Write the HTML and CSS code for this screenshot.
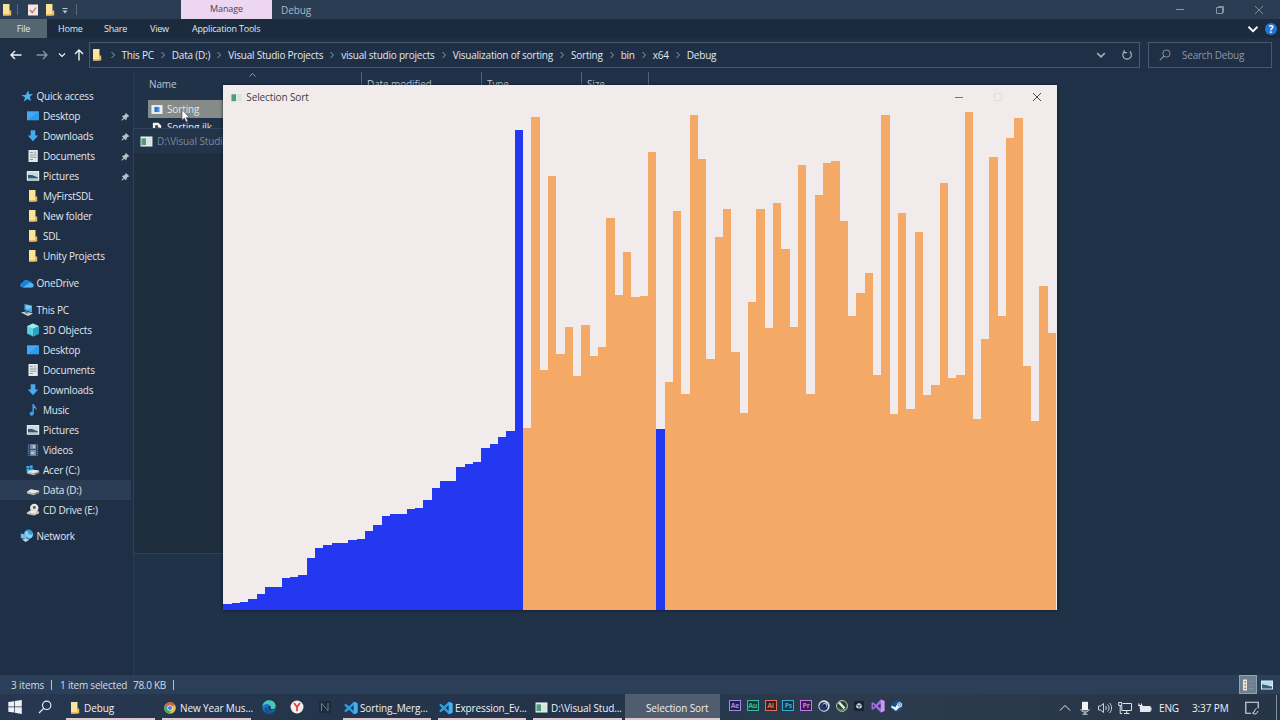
FILE: index.html
```html
<!DOCTYPE html>
<html lang="en">
<head>
<meta charset="utf-8">
<title>Debug</title>
<link rel="stylesheet" href="styles.css">
</head>
<body>
<svg class="defs" aria-hidden="true">
  <symbol id="folder" viewBox="0 0 14 14"><path d="M3 1h6.500v8H3z" fill="#f8dc8b"/><path d="M3 1h6v11.500H3z" fill="#fbe39a"/><path d="M9 7.500h2.200v5H3V11h6z" fill="#e8bd62"/></symbol>
  <symbol id="star" viewBox="0 0 14 14"><path d="M8.300 1.500l.8 3.800 4-.2-3.200 2.600 1 4.300L7.600 10l-3.800 2.600 1.300-4.200-3.700-2.300 4.200-.2z" fill="#4db0ef"/></symbol>
  <symbol id="desktop" viewBox="0 0 14 14"><path d="M1 2.500h12v8.800H1z" fill="#2f9be8"/><path d="M1 2.500h12L1 11.300z" fill="#41aaf2"/></symbol>
  <symbol id="down" viewBox="0 0 14 14"><path d="M4.700 1.300h4.600v5.200h3L7 12.200 1.700 6.500h3z" fill="#4aa9ee"/></symbol>
  <symbol id="doc" viewBox="0 0 14 14"><path d="M2.500 1h9.300v12H2.500z" fill="#e6e8e8"/><path d="M4 3.500h3M4 6h6.500M4 8.200h6.500M4 10.500h3M9 2.500v2.300" stroke="#7594a7" stroke-width=".9"/></symbol>
  <symbol id="pic" viewBox="0 0 14 14"><path d="M.8 2h12.400v9.800H.8z" fill="#e2e8eb"/><path d="M2 3.200h10v7.300H2z" fill="#c3dae4"/><path d="M2 6l4 0 6 2.500v1H2z" fill="#37576b"/><path d="M2 9h10v1.500H2z" fill="#8fb0b8"/></symbol>
  <symbol id="cloud" viewBox="0 0 14 14"><path d="M3 11.500C.8 11.500.2 10.200 .2 9 .2 7.500 1.300 6.500 2.700 6.400 3.500 3.800 7 2.800 9 5c2 0 3 1 3 2.300 2.500.7 2.200 4.200-.5 4.200z" fill="#1b83dc"/><path d="M3 11.500l6-4.500c2-1.200 5 .8 4.500 2.600-.3 1.300-1 1.900-2 1.900z" fill="#51b3f3"/></symbol>
  <symbol id="pc" viewBox="0 0 14 14"><path d="M4.500 1l7.500 1.500v7L4.500 7z" fill="#47a9e4"/><path d="M6 2.300l5 1v2L6 6z" fill="#82cef4"/><path d="M1 9.500l5-1 7 2-5 2.500z" fill="#cfd8de"/><path d="M4 9.500l3-.5 2.500 1-3 .7z" fill="#5e7487"/></symbol>
  <symbol id="cube" viewBox="0 0 14 14"><path d="M7 .5l6 2.700v7.500l-6 2.800-6-2.800V3.200z" fill="#43c1d6"/><path d="M7 .5l6 2.700-6 2.500-6-2.500z" fill="#9aebf0"/><path d="M7 5.700l6-2.500v7.500l-6 2.800z" fill="#25a4c1"/><path d="M2 4l5 2v6L2 9.500z" fill="#62d1dd"/></symbol>
  <symbol id="music" viewBox="0 0 14 14"><path d="M6.500 1h1.300c.3 2.400 3.800 3.200 2.500 6.600-.2-1.500-1.200-2.300-2.400-2.500v5.100c0 3.300-4.400 3-4.200.6.200-1.800 1.800-2.300 2.800-1.800z" fill="#44a5e9"/></symbol>
  <symbol id="video" viewBox="0 0 14 14"><path d="M1.500 1h11v12h-11z" fill="#273f5e"/><path d="M4.200 1.300h5.700v5H4.200zM4.200 7h5.700v5.700H4.200z" fill="#7897b8"/><path d="M7 2h2v3H7zM5 9h3v2H5z" fill="#cdc4a1"/><path d="M2.700 1.500v11M11.200 1.500v11" stroke="#94a8b5" stroke-width="1" stroke-dasharray="1 1.100"/></symbol>
  <symbol id="drive" viewBox="0 0 14 14"><path d="M.8 9L5 6.500l8.300 1.300-.2 2.200-5.200 2.200L1 10.500z" fill="#b2b6b8"/><path d="M.8 8.800L5 6.300l8.200 1.400-4.800 2.500z" fill="#e8e7e2"/><path d="M8 11.200l4.300-1.600" stroke="#60727d"/></symbol>
  <symbol id="cd" viewBox="0 0 14 14"><circle cx="8.300" cy="5" r="4.200" fill="#e9e4df"/><circle cx="8.300" cy="4.500" r="1.400" fill="#485868"/><path d="M.8 9.500L5 7l8.200 1.400-.2 2.200-5 2L1 11z" fill="#c5c3bf"/><path d="M2 9.300l4-1.800 6 1-4 2z" fill="#f1e8df"/></symbol>
  <symbol id="net" viewBox="0 0 14 14"><circle cx="8.500" cy="5.200" r="4.700" fill="#3f97d7"/><path d="M5 3c2-2 4 0 3.500 1.500S11 6 13 5c-.2 2-1 3.500-3 4.500-3-1-3.500-2-5-3z" fill="#8bd3e9"/><path d="M.8 4.500l5.500 1.300v4.400L.8 9z" fill="#71bfe3"/><path d="M2 10.500l4.500-.7 3 1-4 2.200z" fill="#c3d4dd"/></symbol>
  <symbol id="pin" viewBox="0 0 10 10"><path d="M5.500 1l3.800 3.600-.8.8-.8-.2-1.600 1.900v1.600l-.8.500-1.700-1.800L1 9.700.4 9l2.300-2.600L1 4.800l.6-.7 1.700-.1 1.800-1.700-.2-.8z" fill="#b6c0c9"/></symbol>
  <symbol id="console" viewBox="0 0 14 12"><path d="M.5 .5h13v11H.5z" fill="#e9edeb"/><path d="M1.500 2.500h5v7.500h-5z" fill="#4f9b82"/><path d="M7.500 2.500h5v7.500h-5z" fill="#d6e5dd"/></symbol>
  <symbol id="exe" viewBox="0 0 14 12"><path d="M.5 .8h13v10.400H.5z" fill="#e8eef3"/><path d="M4 3h4v6H4z" fill="#2377cf"/><path d="M8 3h2v6H8z" fill="#549ae0"/></symbol>
  <symbol id="chev" viewBox="0 0 8 8"><path d="M2.500 1l3 3-3 3" fill="none" stroke="#91a0b2" stroke-width="1"/></symbol>
  <symbol id="vdown" viewBox="0 0 8 8"><path d="M1 2.500l3 3 3-3" fill="none" stroke="currentColor" stroke-width="1.200"/></symbol>
  <symbol id="arrow" viewBox="0 0 12 12"><path d="M11.500 6H1M5 2L1 6l4 4" fill="none" stroke="currentColor" stroke-width="1.400"/></symbol>
  <symbol id="x" viewBox="0 0 10 10"><path d="M1 1l8 8M9 1L1 9" fill="none" stroke="currentColor" stroke-width=".9"/></symbol>
  <symbol id="mag" viewBox="0 0 14 14"><circle cx="8.700" cy="5.300" r="4.200" fill="none" stroke="currentColor" stroke-width="1.100"/><path d="M5.700 8.300L1 13" stroke="currentColor" stroke-width="1.200"/></symbol>
  <symbol id="vscode" viewBox="0 0 14 14"><path d="M9.800 .7L13.500 2.300v9.400l-3.700 1.600L5 8.800 1.800 11.200.5 10.500v-1L3 7 .5 4.500v-1l1.300-.7L5 5.200zM9.800 4L6.500 7l3.300 3z" fill="#2d9de3" fill-rule="evenodd"/><path d="M9.800 .7l3.700 1.600v9.400l-3.700 1.600z" fill="#45b1f2"/></symbol>
</svg>

<main class="explorer">
  <header class="titlebar">
    <div class="quick">
      <svg class="i14"><use href="#folder"/></svg><i class="bar"></i>
      <svg class="i12 check" viewBox="0 0 12 12"><path d="M1 .5h10v11H1z" fill="#f1e6e4"/><path d="M3 6l2.300 2.500L9 3.500" fill="none" stroke="#cf6b50" stroke-width="1.200"/></svg>
      <svg class="i14"><use href="#folder"/></svg>
      <svg class="qdown" viewBox="0 0 8 8"><path d="M1.500 1.500h5" stroke="#bcc5cf"/><path d="M1.500 3.500h5L4 6.500z" fill="#bcc5cf"/></svg><i class="bar"></i>
    </div>
    <div class="manage">Manage</div>
    <div class="wtitle">Debug</div>
    <div class="controls">
      <svg class="i10" viewBox="0 0 10 10"><path d="M1 4.500h8" stroke="currentColor"/></svg>
      <svg class="i10" viewBox="0 0 10 10"><path d="M1.500 2.500h6v6h-6zM3.500 2.500v-1h5v6h-1" fill="none" stroke="currentColor"/></svg>
      <svg class="i10"><use href="#x"/></svg>
    </div>
  </header>
  <nav class="ribbon">
    <span class="file">File</span><span class="t-home">Home</span><span class="t-share">Share</span><span class="t-view">View</span><span class="t-app">Application Tools</span>
    <div class="help"><svg class="i12"><use href="#vdown"/></svg><b>?</b></div>
  </nav>
  <div class="address">
    <div class="arrows">
      <svg class="i12"><use href="#arrow"/></svg>
      <svg class="i12 fwd"><use href="#arrow"/></svg>
      <svg class="i8"><use href="#vdown"/></svg>
      <svg class="i12 up"><use href="#arrow"/></svg>
    </div>
    <div class="path">
      <svg class="i14"><use href="#folder"/></svg>
      <svg class="i8"><use href="#chev"/></svg><span>This PC</span>
      <svg class="i8"><use href="#chev"/></svg><span>Data (D:)</span>
      <svg class="i8"><use href="#chev"/></svg><span>Visual Studio Projects</span>
      <svg class="i8"><use href="#chev"/></svg><span>visual studio projects</span>
      <svg class="i8"><use href="#chev"/></svg><span>Visualization of sorting</span>
      <svg class="i8"><use href="#chev"/></svg><span>Sorting</span>
      <svg class="i8"><use href="#chev"/></svg><span>bin</span>
      <svg class="i8"><use href="#chev"/></svg><span>x64</span>
      <svg class="i8"><use href="#chev"/></svg><span>Debug</span>
      <div class="pathend"><svg class="i10"><use href="#vdown"/></svg>
      <svg class="i12" viewBox="0 0 12 12"><path d="M3.800 2.200A4.300 4.300 0 1 0 8.800 2.500M3.200 1v2.700H6" fill="none" stroke="currentColor" stroke-width="1.200"/></svg></div>
    </div>
    <div class="search"><svg class="i12"><use href="#mag"/></svg><span>Search Debug</span></div>
  </div>
  <div class="body">
    <aside class="tree">
      <div class="group">
        <div class="row top"><svg class="i14"><use href="#star"/></svg>Quick access</div>
        <div class="row"><svg class="i14"><use href="#desktop"/></svg>Desktop<svg class="pin"><use href="#pin"/></svg></div>
        <div class="row"><svg class="i14"><use href="#down"/></svg>Downloads<svg class="pin"><use href="#pin"/></svg></div>
        <div class="row"><svg class="i14"><use href="#doc"/></svg>Documents<svg class="pin"><use href="#pin"/></svg></div>
        <div class="row"><svg class="i14"><use href="#pic"/></svg>Pictures<svg class="pin"><use href="#pin"/></svg></div>
        <div class="row"><svg class="i14"><use href="#folder"/></svg>MyFirstSDL</div>
        <div class="row"><svg class="i14"><use href="#folder"/></svg>New folder</div>
        <div class="row"><svg class="i14"><use href="#folder"/></svg>SDL</div>
        <div class="row"><svg class="i14"><use href="#folder"/></svg>Unity Projects</div>
      </div>
      <div class="group"><div class="row top"><svg class="i14"><use href="#cloud"/></svg>OneDrive</div></div>
      <div class="group">
        <div class="row top"><svg class="i14"><use href="#pc"/></svg>This PC</div>
        <div class="row"><svg class="i14"><use href="#cube"/></svg>3D Objects</div>
        <div class="row"><svg class="i14"><use href="#desktop"/></svg>Desktop</div>
        <div class="row"><svg class="i14"><use href="#doc"/></svg>Documents</div>
        <div class="row"><svg class="i14"><use href="#down"/></svg>Downloads</div>
        <div class="row"><svg class="i14"><use href="#music"/></svg>Music</div>
        <div class="row"><svg class="i14"><use href="#pic"/></svg>Pictures</div>
        <div class="row"><svg class="i14"><use href="#video"/></svg>Videos</div>
        <div class="row"><svg class="i14" viewBox="0 0 14 14"><use href="#drive" width="14" height="14"/><path d="M.5 3h2.700v2.500H.5zM3.700 2.500h3v3h-3zM.5 6h2.700v2.200H.5zM3.700 6h3v1.500h-3z" fill="#35b4ec"/></svg>Acer (C:)</div>
        <div class="row selected"><svg class="i14"><use href="#drive"/></svg>Data (D:)</div>
        <div class="row"><svg class="i14"><use href="#cd"/></svg>CD Drive (E:)</div>
      </div>
      <div class="group"><div class="row top"><svg class="i14"><use href="#net"/></svg>Network</div></div>
    </aside>
    <section class="files">
      <div class="cols"><span class="c-name">Name<svg class="sort" viewBox="0 0 8 4"><path d="M1 3.500l3-3 3 3" fill="none" stroke="#a5b2c0" stroke-width=".8"/></svg></span><span class="c-date">Date modified</span><span class="c-type">Type</span><span class="c-size">Size</span></div>
      <div class="filerow active"><svg class="fi"><use href="#exe"/></svg>Sorting</div>
      <div class="filerow"><svg class="fi" viewBox="0 0 12 12"><path d="M1.500 .8h6l3 3V12h-9z" fill="#f3eeea"/><path d="M4 3.500h3V6h2v4H4z" fill="#35414f"/></svg>Sorting.ilk</div>
    </section>
  </div>
  <footer class="status"><span class="s1">3 items</span><span class="s2">1 item selected</span><span class="s3">78.0 KB</span>
    <div class="views"><svg class="details" viewBox="0 0 18 19"><path d="M0 0h18v19H0z" fill="#6e7f8d"/><path d="M.5 .5h17v18H.5z" fill="none" stroke="#94a2ac"/><path d="M4 4.500h4v11H4z" fill="#efe5df"/><path d="M5.500 6h1.500v1.500H5.500zm0 3.300h1.500v1.500H5.500zm0 3.200h1.500V14H5.500z" fill="#8a7470"/><path d="M9.500 6.500h5m-5 3.500h5m-5 3.500h5" stroke="#8998a2" stroke-width=".7"/></svg><svg class="i12" viewBox="0 0 12 12"><path d="M0 1.500h12v9H0z" fill="#dceaf2"/><path d="M1 5l4 1 6 1.500v2H1z" fill="#34607a"/><path d="M1 2.500h10v3L7 6 1 5z" fill="#b6daeb"/></svg></div>
  </footer>
</main>

<div class="console"><div class="console-title"><svg class="ci"><use href="#console"/></svg>D:\Visual Studio Projects</div></div>

<div class="app">
  <div class="app-title"><svg class="ci"><use href="#console"/></svg><span>Selection Sort</span>
    <div class="app-controls">
      <svg class="i10" viewBox="0 0 10 10"><path d="M1 5.500h8" stroke="#777"/></svg>
      <svg class="i10" viewBox="0 0 10 10"><path d="M1.500 1.500h7v7h-7z" fill="none" stroke="#e3dddd"/></svg>
      <svg class="i10 close"><use href="#x"/></svg>
    </div>
  </div>
  <div class="chart" id="chart"></div>
</div>
<svg class="cursor" viewBox="0 0 10 14"><path d="M1 .8v10.500l2.400-2.200 1.700 4 1.800-.8-1.700-3.900h3.300z" fill="#fff" stroke="#3b4047" stroke-width=".6"/></svg>

<div class="taskbar">
  <div class="cell w-start"><svg class="i14" viewBox="0 0 14 14"><path d="M.3 2l5.700-.8v5.300H.3zM6.700 1.100L13.800 0v6.500H6.700zM.3 7.300H6v5.200l-5.700-.8zM6.700 7.300h7.100V14l-7.100-1.200z" fill="#eef2f6"/></svg></div>
  <div class="cell w-search"><svg class="i14"><use href="#mag"/></svg></div>
  <div class="task open t1"><svg class="i14"><use href="#folder"/></svg>Debug</div>
  <div class="task open t2"><svg class="i12" viewBox="0 0 12 12"><circle cx="6" cy="6" r="5.800" fill="#eac44a"/><path d="M6 6L1 3.100A5.800 5.800 0 0 1 11 3.100z" fill="#dc5b4a"/><path d="M1 3.100A5.800 5.800 0 0 0 5.600 11.800L8.200 7z" fill="#48a866"/><circle cx="6" cy="6" r="2.700" fill="#f2f2f2"/><circle cx="6" cy="6" r="2.100" fill="#4386dd"/></svg>New Year Mus...</div>
  <div class="cell w-edge"><svg class="i14" viewBox="0 0 14 14"><circle cx="7" cy="7" r="6.700" fill="#1c77cb"/><path d="M.3 6.500C1 2.500 4 .3 7 .3c5 0 7.300 4 6.500 6.800-.6 2-3.300 2.500-5 1.600C10 6 7 3.500 4 4 2 4.300 1 5.500.3 6.500z" fill="#45cbb0"/><path d="M5.500 6.500c-1.500 3 1.500 6.500 6.500 4.800-4 3.800-10.500 1.700-9.500-2.300.3-1.300 1.700-2.400 3-2.500z" fill="#135196"/><path d="M6.200 6.700c.5-1 2-1 2.500 0 .3.700-.5 1.500-.2 2 1.200.8 3 .7 4.500-.2-1 1.700-2 2.200-3.500 2.200-2.700 0-4-2.300-3.300-4z" fill="#223a58"/></svg></div>
  <div class="cell w-y"><svg class="i14" viewBox="0 0 14 14"><circle cx="7" cy="7" r="6.500" fill="#f5eeee"/><path d="M4 3l3 4 3-4M7 7v4.300" fill="none" stroke="#dc3535" stroke-width="1.600"/></svg></div>
  <div class="cell w-n"><svg class="i12" viewBox="0 0 12 12"><path d="M0 0h12v12H0z" fill="#1c2b3e"/><path d="M2.500 10V2.200L9 9.800V2" fill="none" stroke="#6a7c90"/></svg></div>
  <div class="task open t3"><svg class="i14"><use href="#vscode"/></svg>Sorting_Merg...</div>
  <div class="task open t4"><svg class="i14"><use href="#vscode"/></svg>Expression_Ev...</div>
  <div class="task open t5"><svg class="ci"><use href="#console"/></svg>D:\Visual Stud...</div>
  <div class="task open t6">Selection Sort</div>
  <div class="dock">
    <b class="ae">Ae</b><b class="au">Au</b><b class="ai">Ai</b><b class="ps">Ps</b><b class="pr">Pr</b>
    <svg class="i12" viewBox="0 0 12 12"><circle cx="6" cy="6" r="5.700" fill="#e3e8f3"/><circle cx="5.700" cy="6.300" r="4.400" fill="#26376f"/><circle cx="7" cy="5" r="2.300" fill="#9eb2dc"/><circle cx="6.500" cy="5.800" r="1.700" fill="#172449"/></svg>
    <svg class="i12" viewBox="0 0 12 12"><circle cx="6" cy="6" r="5.400" fill="#24412f" stroke="#bdcfba"/><path d="M3 2.500l5.500 5.800" stroke="#e7eee5" stroke-width="2.400"/><path d="M2.500 8c2 3 5 2 7 1" fill="none" stroke="#7bb45b"/></svg>
    <svg class="i12" viewBox="0 0 12 12"><path d="M1 1h10v10H1z" fill="#172435"/><path d="M6 3l2.700 1.500v3L6 9 3.300 7.500v-3z" fill="#d6dce2"/><path d="M6 6V9M6 6L3.500 4.600M6 6l2.500-1.400" stroke="#263545" stroke-width=".9"/></svg>
    <svg class="i14" viewBox="0 0 14 14"><path d="M9.800 .5l3.700 1.500v10l-3.700 1.500-5-5L2 10.800.5 10V4L2 3.200l2.800 2.300zM9.800 4.200L6.700 7l3.100 2.800zM2 5.200v3.600L3.700 7z" fill="#a269e2" fill-rule="evenodd"/><path d="M9.800 .5l3.700 1.500v10l-3.700 1.500z" fill="#c29bf3"/></svg>
    <svg class="i12" viewBox="0 0 12 12"><circle cx="6" cy="6" r="5.800" fill="#175089"/><path d="M.3 5.500l4 1.700L6 4.500a2.600 2.600 0 1 1 2.700 3L6.500 9c-.4 2-3 2-3.500 0L.5 8z" fill="#eef3f7"/><circle cx="8.500" cy="4.800" r="1.500" fill="#c5d7e6" stroke="#36577e" stroke-width=".6"/></svg>
  </div>
  <div class="tray">
    <div class="ti"><svg class="i12" viewBox="0 0 12 12"><path d="M.8 8.500L6 3.500l5.200 5" fill="none" stroke="#dce2e8"/></svg></div>
    <div class="ti"><svg class="i14" viewBox="0 0 14 14"><path d="M4 .8h6v8.500H4z" fill="#f2f2f3"/><path d="M2.800 8c0 4 8.400 4 8.400 0M7 11v2M4.500 13.200h5" fill="none" stroke="#d9dfe4"/></svg></div>
    <div class="ti"><svg class="i14" viewBox="0 0 14 14"><path d="M.5 5h2L5.500 2.500v9L2.500 9h-2zM7.500 5c1 1.200 1 2.800 0 4M9.500 3.500c2 2 2 5 0 7M11.500 2c2.800 3 2.800 7 0 10" fill="none" stroke="#dce2e8" stroke-width=".9"/></svg></div>
    <div class="ti"><svg class="i14" viewBox="0 0 14 14"><path d="M4.500 2.500h9v7H3.800V5M8.700 9.500v3M6 12.500h5.500M.7 1.500h3v3h-3zM2.200 4.500v8h2" fill="none" stroke="#dce2e8"/></svg></div>
    <div class="ti"><svg class="i14" viewBox="0 0 14 14"><path d="M2 5h10.500v1.500h1v3h-1V11H2z" fill="#e4e8ec"/><path d="M0 4.500h4.500M1 2.500v2M3.500 2.500v2M2.300 5v3" stroke="#f1f3f5"/></svg></div>
    <span class="eng">ENG</span><span class="clock">3:37 PM</span>
    <svg class="i14 note" viewBox="0 0 14 14"><path d="M6 12.200H.8V1.200h12.400v6" fill="none" stroke="#e1e6eb" stroke-width="1.100"/><path d="M11.500 7.500c-2.500 1-1.500 4-4 4.500 2 2 5.500.5 5.300-2" fill="none" stroke="#e1e6eb"/></svg>
    <i class="edge"></i>
  </div>
</div>
<script src="chart.js"></script>
</body>
</html>
```

FILE: styles.css
```css
* { box-sizing: border-box; }
body { margin: 0; width: 1280px; height: 720px; overflow: hidden; display: flex; flex-direction: column; background: #203248; color: #e1e7ee; font: 10px/14px "Open Sans", "Noto Sans", sans-serif; letter-spacing: -.12px; white-space: nowrap; }
svg { display: block; flex: none; }
.defs { position: absolute; width: 0; height: 0; }
.i8 { width: 8px; height: 8px; }
.i10 { width: 10px; height: 10px; }
.i12 { width: 12px; height: 12px; }
.i14 { width: 14px; height: 14px; }
.ci { width: 13px; height: 11px; }

.explorer { height: 694px; display: flex; flex-direction: column; }
.titlebar { height: 19px; display: flex; align-items: center; background: #2b3d53; color: #aab6c2; }
.quick { width: 181px; display: flex; align-items: center; }
.quick .bar { width: 1px; height: 11px; background: #59697b; margin: 0 9px 0 3px; }
.quick .check { margin-right: 4px; }
.qdown { width: 8px; height: 8px; margin: 2px 4px 0 4px; }
.manage { width: 91px; height: 19px; background: #edd7f0; color: #4b4054; text-align: center; line-height: 18px; font-size: 9px; }
.wtitle { margin-left: 9px; line-height: 20px; }
.controls { margin-left: auto; width: 105px; padding-right: 16px; display: flex; justify-content: space-between; color: #8794a2; }
.ribbon { height: 19px; background: #1b2a3d; display: flex; align-items: center; line-height: 20px; font-size: 9px; letter-spacing: -.2px; }
.file { width: 47px; height: 19px; background: #536672; text-align: center; }
.t-home { margin-left: 11px; width: 46px; }
.t-share { width: 46px; }
.t-view { width: 42px; }
.help { margin-left: auto; display: flex; align-items: center; gap: 6px; color: #fff; padding-right: 3px; }
.help b { width: 12px; height: 12px; border-radius: 50%; background: #2475cf; text-align: center; line-height: 12px; font-size: 10px; }
.address { height: 34px; display: flex; padding: 4px 8px 4px 9px; background: #1f2f45; }
.arrows { width: 80px; display: flex; align-items: center; color: #f0f3f6; padding-left: 1px; gap: 14px; }
.arrows .fwd { transform: scaleX(-1); color: #8593a4; }
.arrows .i8 { margin: 0 -6px 0 -4px; }
.arrows .up { transform: rotate(90deg); margin-left: -1px; }
.path { width: 1051px; border: 1px solid #47596d; display: flex; align-items: center; letter-spacing: -.22px; }
.path > .i8 { margin: 0 5px 0 5px; }
.path > .i14 + .i8 { margin-left: 4.500px; }
.pathend { margin-left: auto; display: flex; align-items: center; gap: 15px; padding-right: 6px; color: #a4b0bd; }
.search { margin-left: 8px; flex: 1; border: 1px solid #47596d; display: flex; align-items: center; padding-left: 10px; gap: 11px; color: #8a98a8; letter-spacing: -.22px; }

.body { flex: 1; display: flex; }
.tree { width: 134px; padding-top: 14.300px; background: #1f2f45; border-right: 1px solid #2b3d52; letter-spacing: -.2px; }
.group { margin-bottom: 6.700px; }
.row { height: 20px; display: flex; align-items: center; gap: 3px; padding-left: 26px; padding-right: 1px; margin-right: 2px; }
.row.top { padding-left: 20px; gap: 2.500px; }
.row.selected { background: #2b3c55; }
.pin { width: 9px; height: 9px; margin-left: auto; }
.files { flex: 1; background: #203248; padding-left: 14px; }
.cols { height: 28px; display: flex; line-height: 24px; color: #bac5d0; }
.cols span { border-right: 1px solid #526276; }
.c-name { position: relative; width: 214px; padding-left: 1px; }
.sort { position: absolute; left: 100px; top: 1px; width: 9px; height: 4px; }
.c-date { width: 120px; padding-left: 5px; }
.c-type { width: 100px; padding-left: 5px; }
.c-size { width: 67px; padding-left: 5px; }
.filerow { height: 18px; display: flex; align-items: center; gap: 4px; padding-left: 3px; }
.filerow.active { width: 200px; background: #858b88; }
.fi { width: 12px; height: 11px; }
.status { height: 19px; background: #2c3f58; display: flex; align-items: center; padding-left: 11px; color: #d4dbe3; }
.s1 { width: 41px; border-right: 1px solid #b8c2cd; line-height: 10px; margin-right: 8px; }
.s2 { width: 73px; letter-spacing: -.22px; }
.s3 { width: 41px; border-right: 1px solid #b8c2cd; line-height: 10px; letter-spacing: -.3px; }
.views { margin-left: auto; display: flex; align-items: center; gap: 4px; padding-right: 7px; }
.details { width: 18px; height: 19px; }

.console { position: absolute; left: 134px; top: 129px; width: 200px; height: 424px; background: #1e2e3f; box-shadow: 0 0 0 1px #304257; }
.console-title { height: 24px; background: #22344a; display: flex; align-items: center; gap: 4px; padding-left: 6px; color: #7b8999; }
.app { position: absolute; left: 223.300px; top: 85px; width: 833.400px; height: 525px; display: flex; flex-direction: column; background: #f1ebeb; box-shadow: 0 0 3px rgba(6, 16, 28, .8); color: #414146; }
.app-title { height: 25px; display: flex; align-items: center; gap: 3px; padding: 0 15px 1px 7px; }
.app-controls { margin-left: auto; width: 88px; display: flex; justify-content: space-between; color: #38383d; }
.chart { flex: 1; display: flex; align-items: flex-end; }
.chart div { flex: 1 1 0; background: #f4aa66; }
.chart .hot { background: #2338f0; }
.cursor { position: absolute; left: 181px; top: 109px; width: 10px; height: 14px; }

.taskbar { height: 26px; display: flex; background: linear-gradient(90deg, #26374f, #22334a 45%, #2c3b4d 65%, #263448); color: #eef1f5; }
.cell { display: flex; align-items: center; justify-content: center; }
.w-start { width: 30px; }
.w-search { width: 30px; margin-right: 6px; }
.w-edge { width: 36px; }
.w-y { width: 20px; margin-right: 8px; }
.w-n { width: 20px; margin-right: 8px; }
.task { display: flex; align-items: center; gap: 3px; padding-left: 2px; border-bottom: 2px solid #dfc9d0; padding-top: 3px; }
.t1 { width: 89px; margin-right: 7px; gap: 2px; }
.t2 { width: 89px; gap: 4px; }
.t3, .t4 { width: 88px; margin-right: 7px; gap: 2px; padding-left: 1px; }
.t5 { width: 89px; margin-right: 3px; }
.t6 { width: 95px; background: #505d6e; padding-left: 21px; }
.dock { margin-left: 9px; width: 174px; display: flex; align-items: center; justify-content: space-between; padding-bottom: 3px; }
.dock b { width: 12px; height: 11px; border: 1px solid; font-size: 7px; line-height: 9px; text-align: center; background: #211d45; letter-spacing: -.3px; }
.dock .ae { color: #9c8cec; }
.dock .au { color: #38bda0; background: #123c40; }
.dock .ai { color: #e0725a; background: #3a2027; }
.dock .ps { color: #36aed2; background: #123450; }
.dock .pr { color: #c27be8; background: #321d4c; }
.tray { margin-left: auto; display: flex; align-items: center; padding-top: 1px; }
.ti { width: 20px; display: flex; justify-content: center; }
.eng { margin-left: 4px; width: 33px; }
.clock { width: 53px; }
.edge { width: 1px; height: 25px; margin: 0 3px 0 17px; background: #8291a0; }
```

FILE: chart.js
```js
// Height of each bar, left to right, in pixels.
const heights = [
  6.5, 7, 8, 10.7, 15.7, 23, 23, 32, 33, 35,
  52.3, 62.3, 65, 67, 67, 69.7, 71.3, 79, 84.7, 94,
  95.7, 95.7, 100.7, 101.7, 110, 122.3, 129, 129, 143.3, 146.3,
  148, 161.7, 165.7, 173, 179, 480, 182, 493.3, 239.7, 434,
  256, 283.3, 234.3, 285, 254.3, 263.3, 391.7, 315, 357.7, 313.3,
  314.3, 458, 180.7, 228.3, 399, 215.7, 495, 450.7, 250.7, 372.7,
  401, 258, 196.7, 308.3, 401, 281.7, 407.3, 360.7, 283.3, 445,
  216.3, 415, 447.3, 449, 389, 294.3, 316.7, 336.7, 235, 495,
  195.7, 396.7, 201, 377.7, 215, 225, 427.3, 232.3, 235, 497.7,
  191, 271, 452.7, 294.3, 471.7, 491.7, 244.3, 189, 324, 276.7
];
const sortedCount = 36;
const scanIndex = 52;
const chart = document.getElementById('chart');
heights.forEach((h, i) => {
  const bar = document.createElement('div');
  if (i < sortedCount || i === scanIndex) bar.className = 'hot';
  bar.style.height = h + 'px';
  chart.appendChild(bar);
});
```
